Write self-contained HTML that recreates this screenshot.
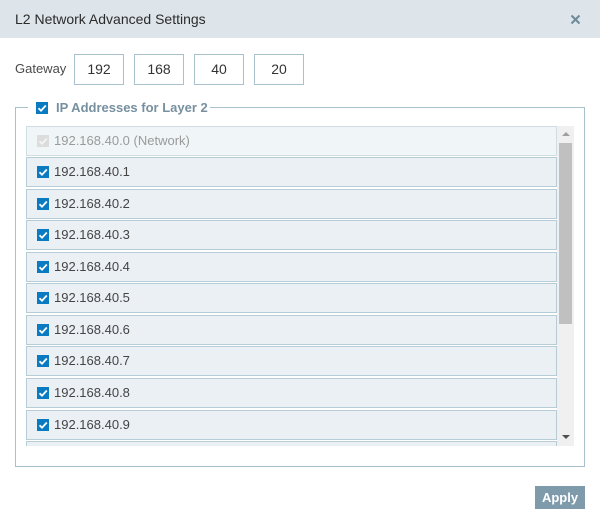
<!DOCTYPE html>
<html><head><style>
*{margin:0;padding:0;box-sizing:border-box}
body{width:600px;height:516px;background:#fff;font-family:"Liberation Sans",sans-serif;position:relative;overflow:hidden;color:#4a4a4a}
.hd{position:absolute;left:0;top:0;width:600px;height:38px;background:#dde4ea}
.ttl{position:absolute;left:15px;top:11px;font-size:14px;color:#2b2b2b}
.x{position:absolute;left:570px;top:14px}
.lbl{position:absolute;left:15px;top:61px;font-size:13px;color:#4a4a4a}
.in{position:absolute;top:54px;width:50px;height:31px;border:1px solid #a9c1cc;font-size:14px;text-align:center;line-height:29px;color:#333}
.fs{position:absolute;left:15px;top:107px;width:570px;height:360px;border:1px solid #a9c1cc}
.lg{position:absolute;left:28px;top:98px;background:#fff;height:18px;width:182px}
.lgt{position:absolute;left:56px;top:100px;font-size:13px;font-weight:bold;color:#7790a0}
.cb{position:absolute;width:12px;height:12px;background:#0a7bc0}
.cb svg{position:absolute;left:0;top:0}
.row{position:absolute;left:26px;width:531px;height:30px;background:#ebf0f4;border:1px solid #b6ccd6}
.row .cb{left:10px;top:8px}
.row span{position:absolute;left:27px;top:6px;font-size:13px;color:#444}
.sb{position:absolute;left:557px;top:126px;width:17px;height:320px;background:#f0f0f0}
.th{position:absolute;left:559px;top:143px;width:13px;height:181px;background:#c0c0c0}
.btn{position:absolute;left:535px;top:486px;width:50px;height:23px;background:#7f9bab;color:#fff;font-weight:bold;font-size:13px;text-align:center;line-height:23px}
</style></head><body>
<div class="hd"><div class="ttl">L2 Network Advanced Settings</div>
<svg class="x" width="11" height="11" viewBox="0 0 11 11"><path d="M1.5 1.5L9.5 9.5M9.5 1.5L1.5 9.5" stroke="#6e8a9a" stroke-width="2"/></svg></div>
<div class="lbl">Gateway</div>
<div class="in" style="left:74px">192</div>
<div class="in" style="left:134px">168</div>
<div class="in" style="left:194px">40</div>
<div class="in" style="left:254px">20</div>
<div class="fs"></div>
<div class="lg"></div>
<div class="cb" style="left:36px;top:102px"><svg width="12" height="12"><path d="M2.5 6.2L5 8.7L9.8 3.5" stroke="#fff" stroke-width="1.8" fill="none"/></svg></div>
<div class="lgt">IP Addresses for Layer 2</div>
<div class="row" style="top:126px;background:#f0f5f8;border-color:#d0dee4"><div class="cb" style="background:#dcdcdc"><svg width="12" height="12"><path d="M2.5 6.2L5 8.7L9.8 3.5" stroke="#f4f4f4" stroke-width="1.8" fill="none"/></svg></div><span style="color:#9a9a9a">192.168.40.0 (Network)</span></div>
<div class="row" style="top:157px"><div class="cb"><svg width="12" height="12"><path d="M2.5 6.2L5 8.7L9.8 3.5" stroke="#fff" stroke-width="1.8" fill="none"/></svg></div><span>192.168.40.1</span></div>
<div class="row" style="top:189px"><div class="cb"><svg width="12" height="12"><path d="M2.5 6.2L5 8.7L9.8 3.5" stroke="#fff" stroke-width="1.8" fill="none"/></svg></div><span>192.168.40.2</span></div>
<div class="row" style="top:220px"><div class="cb"><svg width="12" height="12"><path d="M2.5 6.2L5 8.7L9.8 3.5" stroke="#fff" stroke-width="1.8" fill="none"/></svg></div><span>192.168.40.3</span></div>
<div class="row" style="top:252px"><div class="cb"><svg width="12" height="12"><path d="M2.5 6.2L5 8.7L9.8 3.5" stroke="#fff" stroke-width="1.8" fill="none"/></svg></div><span>192.168.40.4</span></div>
<div class="row" style="top:283px"><div class="cb"><svg width="12" height="12"><path d="M2.5 6.2L5 8.7L9.8 3.5" stroke="#fff" stroke-width="1.8" fill="none"/></svg></div><span>192.168.40.5</span></div>
<div class="row" style="top:315px"><div class="cb"><svg width="12" height="12"><path d="M2.5 6.2L5 8.7L9.8 3.5" stroke="#fff" stroke-width="1.8" fill="none"/></svg></div><span>192.168.40.6</span></div>
<div class="row" style="top:346px"><div class="cb"><svg width="12" height="12"><path d="M2.5 6.2L5 8.7L9.8 3.5" stroke="#fff" stroke-width="1.8" fill="none"/></svg></div><span>192.168.40.7</span></div>
<div class="row" style="top:378px"><div class="cb"><svg width="12" height="12"><path d="M2.5 6.2L5 8.7L9.8 3.5" stroke="#fff" stroke-width="1.8" fill="none"/></svg></div><span>192.168.40.8</span></div>
<div class="row" style="top:410px"><div class="cb"><svg width="12" height="12"><path d="M2.5 6.2L5 8.7L9.8 3.5" stroke="#fff" stroke-width="1.8" fill="none"/></svg></div><span>192.168.40.9</span></div>
<div class="row" style="top:441px;height:5px;border-bottom:none"></div>
<div class="sb"></div>
<div class="th"></div>
<svg style="position:absolute;left:562px;top:131px" width="8" height="6"><path d="M0 5L4 1L8 5Z" fill="#a0a0a0"/></svg>
<svg style="position:absolute;left:562px;top:434px" width="8" height="6"><path d="M0 1L4 5L8 1Z" fill="#505050"/></svg>
<div class="btn">Apply</div>
</body></html>
